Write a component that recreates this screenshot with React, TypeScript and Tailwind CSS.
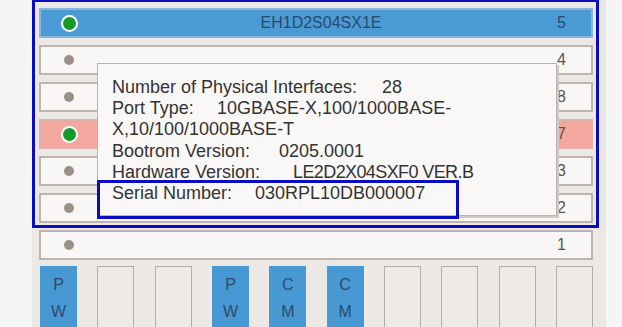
type RowState = "blue" | "pink" | "white";

interface SlotRowProps {
  num: number;
  label?: string;
  state?: RowState;
  led?: "green" | "gray";
}

const rowStyles: Record<RowState, string> = {
  blue: "bg-[#4a9ad5] border-[#86b6dc] text-[#2c4a68]",
  pink: "bg-[#f3a79e] border-[#dcb2ab] text-[#555555]",
  white: "bg-[#f8f7f6] border-[#bdb6b0] text-[#555555]",
};

function SlotRow({ num, label, state = "white", led = "gray" }: SlotRowProps) {
  return (
    <div className={`grid h-[30px] grid-cols-[56px_1fr_34px] items-center border-2 ${rowStyles[state]}`}>
      <div className="flex items-center justify-center">
        {led === "green" ? (
          <div className="h-[13px] w-[13px] rounded-full bg-[#129b27] ring-2 ring-white" />
        ) : (
          <div className="h-[10px] w-[10px] rounded-full bg-[#9b8f88]" />
        )}
      </div>
      <div className="pr-[12px] text-center text-[16px]">{label}</div>
      <div className="text-[16px]">{num}</div>
    </div>
  );
}

const boards: (string | null)[] = ["PW", null, null, "PW", "CM", "CM", null, null, null, null];

// label column widths put each value where the reference has it
const details: { label: string; value: string; w: string; tight?: boolean }[] = [
  { label: "Number of Physical Interfaces:", value: "28", w: "w-[270px]" },
  { label: "Port Type:", value: "10GBASE-X,100/1000BASE-", w: "w-[105px]" },
  { label: "X,10/100/1000BASE-T", value: "", w: "" },
  { label: "Bootrom Version:", value: "0205.0001", w: "w-[167px]" },
  { label: "Hardware Version:", value: "LE2D2X04SXF0 VER.B", w: "w-[181px]", tight: true },
  { label: "Serial Number:", value: "030RPL10DB000007", w: "w-[143px]" },
];

export default function App() {
  return (
    <div
      className="relative flex h-[327px] w-[622px] overflow-hidden bg-[#f5f5f5]"
      style={{ fontFamily: '"Liberation Sans", Arial, sans-serif' }}
    >
      <div className="ml-[32px] flex w-[574px] flex-col bg-[#ebe8e5]">
        <div className="mt-[-1px] flex w-[567px] flex-col gap-[7px] border-[3px] border-[#0b0bc2] pb-[2px] pl-[4px] pr-[3px] pt-[6px]">
          <SlotRow num={5} label="EH1D2S04SX1E" state="blue" led="green" />
          <SlotRow num={4} />
          <SlotRow num={8} />
          <SlotRow num={7} state="pink" led="green" />
          <SlotRow num={3} />
          <SlotRow num={2} />
        </div>
        <div className="ml-[7px] mt-[2px] w-[554px]">
          <SlotRow num={1} />
        </div>
        <div className="ml-[8px] mt-[6px] flex w-[553px] justify-between">
          {boards.map((board, i) =>
            board ? (
              <div
                key={i}
                className="flex h-[70px] w-[37px] flex-col items-center bg-[#4898d3] pt-[5px] text-[16px] leading-[27px] text-[#2c4b6a]"
              >
                <span>{board[0]}</span>
                <span>{board[1]}</span>
              </div>
            ) : (
              <div key={i} className="h-[70px] w-[37px] border border-[#b5aea8] bg-[#ece9e6]" />
            )
          )}
        </div>
      </div>

      <div className="absolute left-[97px] top-[63px] h-[153px] w-[460px] border border-[#bbb4ae] bg-[#f9f8f7] pl-[14px] pt-[13px] text-[18px] leading-[21.2px] text-[#333333] shadow-[2px_2px_0_#cfc9c3]">
        {details.map((d) => (
          <div key={d.label} className="whitespace-nowrap">
            <span className={`inline-block ${d.w}`}>{d.label}</span>
            <span className={d.tight ? "tracking-[-0.6px]" : ""}>{d.value}</span>
          </div>
        ))}
      </div>

      <div className="absolute left-[97px] top-[180px] h-[39px] w-[362px] border-[3px] border-[#0b0bc2]" />
    </div>
  );
}
